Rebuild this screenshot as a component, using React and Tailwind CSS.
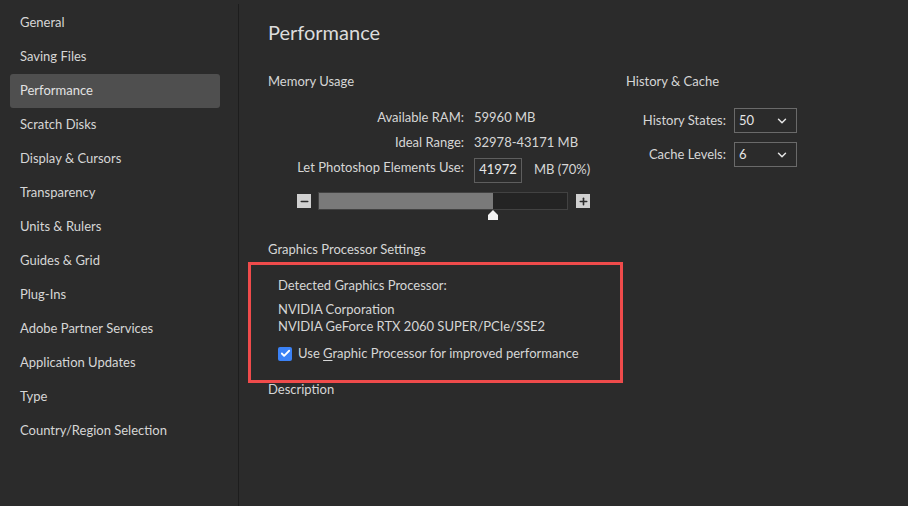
import React, { useState } from 'react';
import { ChevronDown, Check, Minus, Plus } from 'lucide-react';

const navItems = [
  'General',
  'Saving Files',
  'Performance',
  'Scratch Disks',
  'Display & Cursors',
  'Transparency',
  'Units & Rulers',
  'Guides & Grid',
  'Plug-Ins',
  'Adobe Partner Services',
  'Application Updates',
  'Type',
  'Country/Region Selection',
];

const Select = ({ value }) => (
  <div className="w-[63px] h-[25px] border border-[#6a6a6a] flex items-center justify-between pl-[4px] pr-[7px] text-[#e6e6e6]">
    <span>{value}</span>
    <ChevronDown className="w-[14px] h-[14px]" strokeWidth={2.5} />
  </div>
);

const App = () => {
  const [active, setActive] = useState('Performance');
  const [useGpu, setUseGpu] = useState(true);
  const pct = 70;

  return (
    <div
      className="w-[908px] h-[506px] bg-[#2b2b2b] flex text-[13px] text-[#d6d6d6] overflow-hidden"
      style={{ fontFamily: 'Lato, "Noto Sans", sans-serif' }}
    >
      {/* Sidebar */}
      <div className="w-[239px] shrink-0 pt-[2px] mt-[4px] border-r border-[#1d1d1d] flex flex-col pl-[10px] pr-[18px]">
        {navItems.map((item) => (
          <button
            key={item}
            onClick={() => setActive(item)}
            className={`h-[34px] text-left pl-[10px] rounded-[3px] ${
              active === item ? 'bg-[#4f4f4f] text-[#e2e2e2]' : 'text-[#d6d6d6]'
            }`}
          >
            {item}
          </button>
        ))}
      </div>

      {/* Content */}
      <div className="flex-1 pl-[29px] pt-[18px]">
        <h1 className="text-[20px] leading-[28px] text-[#dcdcdc]">Performance</h1>

        <div className="flex mt-[26px]">
          {/* Memory */}
          <div className="w-[358px]">
            <div className="leading-[18px]">Memory Usage</div>
            <div className="mt-[15px] flex flex-col">
              <div className="flex h-[25px] items-center">
                <span className="w-[196px] text-right">Available RAM:</span>
                <span className="pl-[10px]">59960 MB</span>
              </div>
              <div className="flex h-[25px] items-center">
                <span className="w-[196px] text-right">Ideal Range:</span>
                <span className="pl-[10px]">32978-43171 MB</span>
              </div>
              <div className="flex h-[30px] items-center">
                <span className="w-[196px] text-right -mt-[4px]">Let Photoshop Elements Use:</span>
                <span className="ml-[10px] w-[48px] h-[25px] border border-[#5e5e5e] flex items-center justify-center text-[#e6e6e6]">41972</span>
                <span className="pl-[12px]">MB (70%)</span>
              </div>
            </div>
            <div className="flex items-start mt-[7px] ml-[29px]">
              <div className="w-[14px] h-[14px] bg-[#d0d0d0] flex items-center justify-center mt-[2px]">
                <Minus className="w-[11px] h-[11px] text-[#2b2b2b]" strokeWidth={3.5} />
              </div>
              <div className="ml-[7px] w-[250px] flex flex-col">
                <div className="h-[18px] border border-[#424242] bg-[#242424] flex">
                  <div className="h-full bg-[#7a7a7a]" style={{ width: `${pct}%` }} />
                </div>
                <div className="relative h-[11px]">
                  <svg
                    className="absolute top-0"
                    style={{ left: `calc(${pct}% - 6px)` }}
                    width="12"
                    height="11"
                    viewBox="0 0 12 11"
                  >
                    <path d="M6 0 L11 5 L11 10 L1 10 L1 5 Z" fill="#f2f2f2" />
                  </svg>
                </div>
              </div>
              <div className="ml-[8px] w-[14px] h-[14px] bg-[#d0d0d0] flex items-center justify-center mt-[2px]">
                <Plus className="w-[11px] h-[11px] text-[#2b2b2b]" strokeWidth={3.5} />
              </div>
            </div>
          </div>

          {/* History & Cache */}
          <div>
            <div className="leading-[18px]">History &amp; Cache</div>
            <div className="mt-[18px] flex flex-col gap-[9px]">
              <div className="flex items-center">
                <span className="w-[100px] text-right">History States:</span>
                <span className="ml-[8px]"><Select value="50" /></span>
              </div>
              <div className="flex items-center">
                <span className="w-[100px] text-right">Cache Levels:</span>
                <span className="ml-[8px]"><Select value="6" /></span>
              </div>
            </div>
          </div>
        </div>

        {/* Graphics */}
        <div className="mt-[19px] leading-[18px]">Graphics Processor Settings</div>
        <div className="-ml-[20px] mt-[4px] w-[375px] h-[121px] border-[3px] border-[#ef4b4b] pl-[27px] pt-[11px]">
          <div className="leading-[18px]">Detected Graphics Processor:</div>
          <div className="mt-[7px] leading-[17px]">NVIDIA Corporation</div>
          <div className="leading-[17px]">NVIDIA GeForce RTX 2060 SUPER/PCIe/SSE2</div>
          <label className="mt-[9px] flex items-center cursor-pointer">
            <span
              onClick={() => setUseGpu(!useGpu)}
              className={`w-[14px] h-[14px] rounded-[2px] flex items-center justify-center ${
                useGpu ? 'bg-[#3b82f6]' : 'border border-[#8a8a8a]'
              }`}
            >
              {useGpu && <Check className="w-[11px] h-[11px] text-white" strokeWidth={4} />}
            </span>
            <span className="ml-[6px]">
              Use <span className="underline underline-offset-2">G</span>raphic Processor for improved performance
            </span>
          </label>
        </div>
        <div className="mt-[-3px] leading-[18px]">Description</div>
      </div>
    </div>
  );
};

export default App;
